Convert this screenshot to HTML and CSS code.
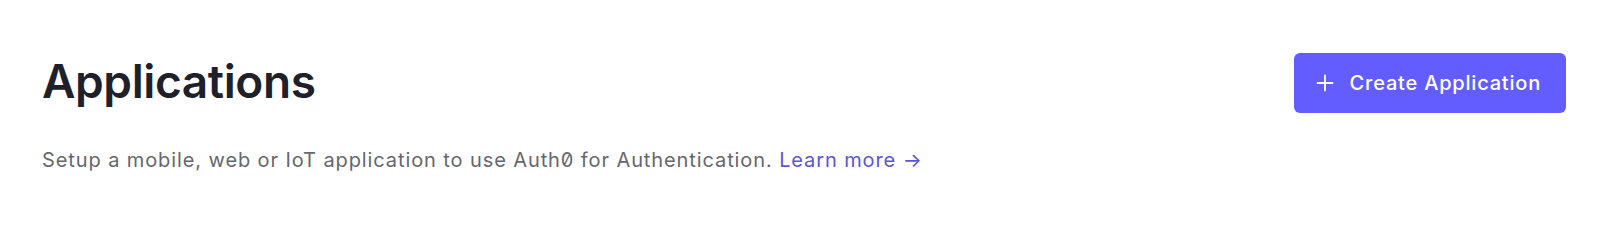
FILE: index.html
```html
<!DOCTYPE html>
<html lang="en">
<head>
<meta charset="utf-8">
<title>Applications</title>
<link rel="stylesheet" href="styles.css">
</head>
<body>
<main class="page">
  <header class="page-header">
    <div class="titles">
      <h1 class="title">Applications</h1>
      <p class="subtitle">Setup a mobile, web or IoT application to use Auth<span class="zero">0</span> for Authentication. <a class="learn" href="#">Learn more <span class="arrow">→</span></a></p>
    </div>
    <button class="create-btn" type="button">
      <svg class="plus" width="18" height="18" viewBox="0 0 18 18" aria-hidden="true"><path d="M9 1.5v15M1.5 9h15" stroke="#fff" stroke-width="1.8" fill="none" stroke-linecap="round"/></svg>
      <span>Create Application</span>
    </button>
  </header>
</main>
</body>
</html>
```
FILE: styles.css
```css
html, body {
  margin: 0;
  padding: 0;
  background: #ffffff;
}
body {
  font-family: Inter, "Noto Sans", "Liberation Sans", sans-serif;
  color: #1e212a;
}
.page {
  padding: 52px 34px 0 42px;
}
.page-header {
  display: flex;
  justify-content: space-between;
  align-items: flex-start;
}
.titles {
  display: flex;
  flex-direction: column;
}
.title {
  margin: 0;
  font-size: 46px;
  font-weight: 600;
  line-height: 58px;
  letter-spacing: -0.4px;
  color: #1e212a;
}
.subtitle {
  margin: 36px 0 0;
  font-size: 20px;
  line-height: 28px;
  letter-spacing: 0.9px;
  color: #65676e;
}
.zero {
  font-feature-settings: "zero" 1;
}
.learn {
  color: #5b55dc;
  text-decoration: none;
}
.create-btn {
  display: flex;
  align-items: center;
  gap: 16px;
  height: 60px;
  padding: 0 25px 0 22px;
  margin-top: 1px;
  border: none;
  border-radius: 6px;
  background: #635dff;
  color: #ffffff;
  font-family: Inter, "Noto Sans", "Liberation Sans", sans-serif;
  font-size: 20px;
  font-weight: 500;
  letter-spacing: 0.8px;
  cursor: pointer;
}
.plus {
  display: block;
}
```
